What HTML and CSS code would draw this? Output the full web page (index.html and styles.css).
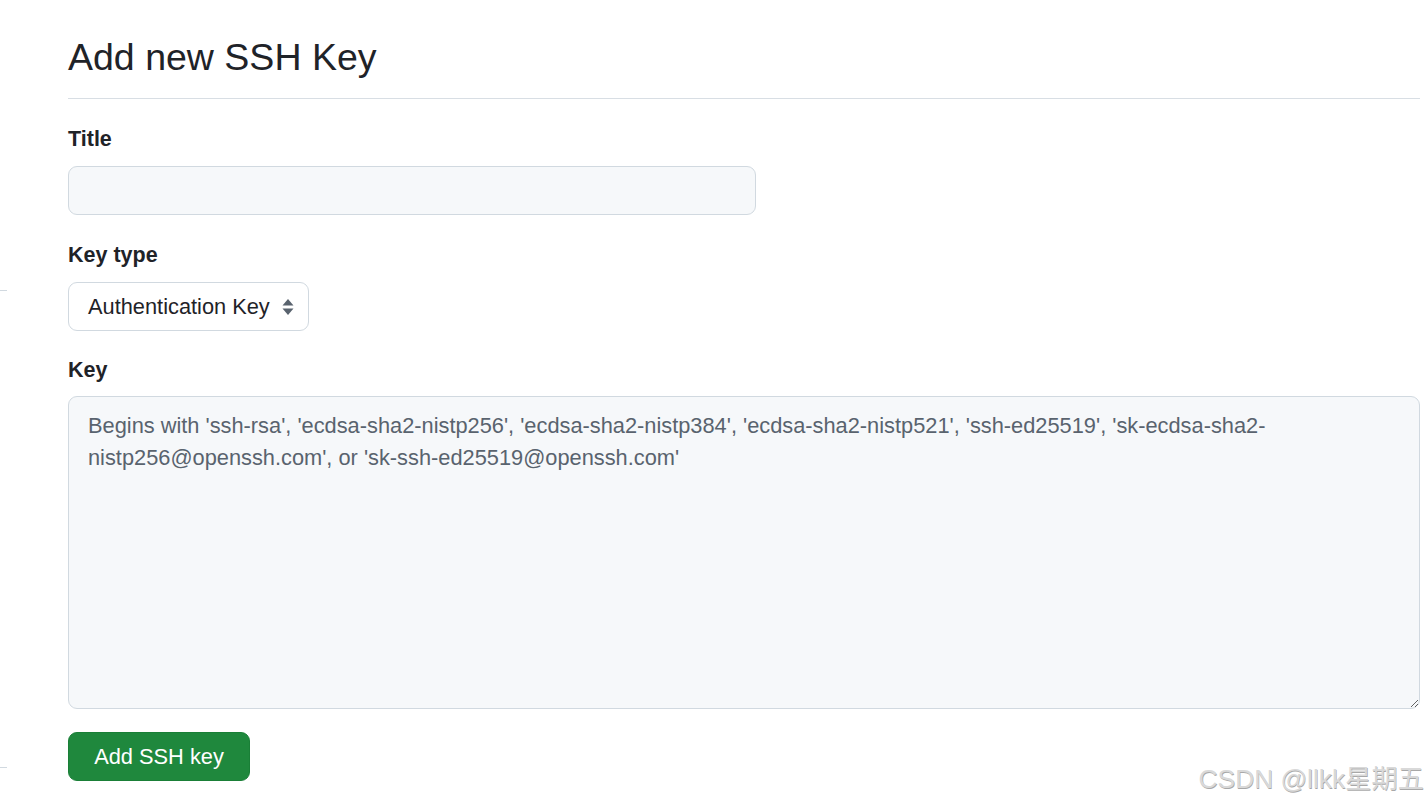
FILE: index.html
```html
<!DOCTYPE html>
<html lang="en">
<head>
<meta charset="utf-8">
<title>Add new SSH Key</title>
<link rel="stylesheet" href="styles.css">
</head>
<body>
<div class="page">
  <div class="subhead">
    <h1 class="subhead-title">Add new SSH Key</h1>
  </div>
  <form class="form">
    <div class="group group-title">
      <label class="label" for="title">Title</label>
      <input class="input title-input" id="title" type="text">
    </div>
    <div class="group">
      <label class="label" for="type">Key type</label>
      <div class="select">
        <span class="select-text">Authentication Key</span>
        <svg class="select-arrows" width="12" height="18" viewBox="0 0 12 18"><path d="M6 1 L11.5 7.5 H0.5 Z" fill="#59636e"/><path d="M6 17 L11.5 10.5 H0.5 Z" fill="#59636e"/></svg>
      </div>
    </div>
    <div class="group">
      <label class="label label-key" for="key">Key</label>
      <textarea class="input key-input" id="key" placeholder="Begins with 'ssh-rsa', 'ecdsa-sha2-nistp256', 'ecdsa-sha2-nistp384', 'ecdsa-sha2-nistp521', 'ssh-ed25519', 'sk-ecdsa-sha2-nistp256@openssh.com', or 'sk-ssh-ed25519@openssh.com'"></textarea>
    </div>
    <div class="actions">
      <button type="button" class="btn-primary">Add SSH key</button>
    </div>
  </form>
</div>
<div class="tick tick-a"></div>
<div class="tick tick-b"></div>
<div class="watermark">CSDN @llkk星期五</div>
</body>
</html>
```
FILE: styles.css
```css
html, body {
  margin: 0;
  padding: 0;
  background: #ffffff;
  font-family: "Liberation Sans", Arial, sans-serif;
  color: #1f2328;
}
.page {
  padding: 27px 8px 0 68px;
  width: 1352px;
}
.subhead {
  border-bottom: 1px solid #d8dee4;
  padding-bottom: 11px;
}
.subhead-title {
  margin: 0;
  font-size: 37.5px;
  line-height: 60px;
  font-weight: 400;
}
.form {
  display: flex;
  flex-direction: column;
  padding-top: 25px;
}
.group {
  display: flex;
  flex-direction: column;
  align-items: flex-start;
  margin-bottom: 24px;
}
.group-title {
  margin-bottom: 25px;
}
.label {
  font-size: 21.5px;
  font-weight: 700;
  line-height: 30px;
  margin-bottom: 12px;
}
.label-key {
  margin-bottom: 11px;
}
.input {
  box-sizing: border-box;
  background: #f6f8fa;
  border: 1px solid #d1d9e0;
  border-radius: 9px;
  font-family: "Liberation Sans", Arial, sans-serif;
  font-size: 21.8px;
  color: #1f2328;
  outline: none;
}
.title-input {
  width: 688px;
  height: 49px;
  padding: 0 18px;
}
.select {
  box-sizing: border-box;
  width: 241px;
  height: 49px;
  border: 1px solid #d1d9e0;
  border-radius: 9px;
  background: #ffffff;
  display: flex;
  align-items: center;
  justify-content: space-between;
  padding: 0 14px 0 19px;
}
.select-text {
  font-size: 21.8px;
  color: #1f2328;
}
.select-arrows {
  display: block;
}
.key-input {
  width: 1352px;
  height: 313px;
  padding: 13px 19px;
  line-height: 32px;
  resize: vertical;
}
.key-input::placeholder {
  color: #59636e;
  opacity: 1;
}
.actions {
  margin-top: -1px;
}
.btn-primary {
  box-sizing: border-box;
  width: 182px;
  height: 49px;
  border: 1px solid #1a7f37;
  border-radius: 9px;
  background: #1f883d;
  color: #ffffff;
  font-family: "Liberation Sans", Arial, sans-serif;
  font-size: 21.8px;
  padding: 0;
}
.tick {
  position: absolute;
  left: 0;
  width: 7px;
  height: 1px;
  background: #d1d9e0;
}
.tick-a { top: 290px; }
.tick-b { top: 767px; }
.watermark {
  position: absolute;
  right: 4px;
  top: 761px;
  font-family: "Liberation Sans", "Noto Sans CJK SC", sans-serif;
  font-size: 26.3px;
  line-height: 36px;
  color: #d9d9d9;
  text-shadow: 0.6px 0.6px 0.4px #a8a8a8;
  white-space: nowrap;
}
```
